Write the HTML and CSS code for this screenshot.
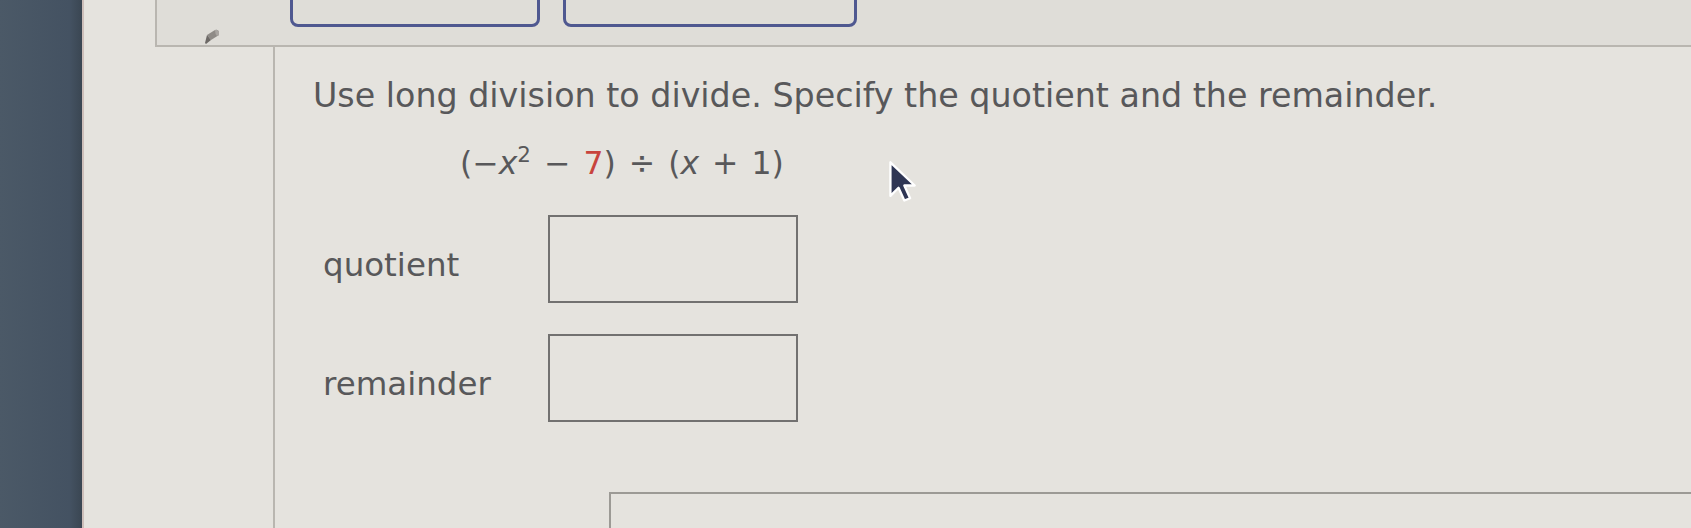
FILE: index.html
```html
<!DOCTYPE html>
<html lang="en">
<head>
    <meta charset="UTF-8">
    <meta name="viewport" content="width=device-width, initial-scale=1.0">
    <title>Long Division</title>
    <link rel="stylesheet" href="styles.css">
</head>
<body>
    <div class="screen">
        <aside class="rail"></aside>

        <div class="page">
            <div class="toolbar">
                <span class="pencil" aria-hidden="true">
                    <svg width="18" height="18" viewBox="0 0 18 18">
                        <path d="M4 8 L12 3 Q15 2 16 5 L16 8 L8 13 Z" fill="#8f8b87"/>
                        <path d="M12 3 Q15 2 16 5 L16 8 L14 9 Q12 7 12 3 Z" fill="#a9a5a1"/>
                        <path d="M4 8 L8 13 L3 17 L2 16 Z" fill="#6d6966"/>
                    </svg>
                </span>
                <button class="tool-btn" aria-label="Tool one"></button>
                <button class="tool-btn tool-btn-wide" aria-label="Tool two"></button>
            </div>

            <main class="question">
                <p class="prompt">Use long division to divide. Specify the quotient and the remainder.</p>

                <div class="expr">(&minus;<i>x</i><sup>2</sup> &minus; <span class="given">7</span>) &divide; (<i>x</i> + 1)</div>

                <div class="answers">
                    <label for="quotient" class="answer-label">quotient</label>
                    <input type="text" id="quotient" class="answer-box">
                    <label for="remainder" class="answer-label">remainder</label>
                    <input type="text" id="remainder" class="answer-box">
                </div>

                <div class="next-panel"></div>
            </main>
        </div>

        <svg class="cursor" width="28" height="44" viewBox="0 0 24 38" aria-hidden="true">
            <path d="M2 2 L2 31 L9 24 L14 35 L19 33 L14 22 L23 22 Z" fill="#2f3654" stroke="#ffffff" stroke-width="2" stroke-linejoin="round"/>
        </svg>
    </div>
</body>
</html>
```

FILE: styles.css
```css
:root {
    --paper: #e5e3de;
    --panel: #dfddd8;
    --rule: #b9b6b0;
    --ink: #58585a;
    --box-line: #727170;
    --tool-blue: #4f5890;
    --given-red: #c8443d;
}

* {
    box-sizing: border-box;
}

body {
    margin: 0;
    background-color: var(--paper);
    font-family: "DejaVu Sans", Verdana, sans-serif;
    color: var(--ink);
    overflow: hidden;
}

.screen {
    position: relative;
    display: flex;
    width: 1691px;
    height: 528px;
    overflow: hidden;
}

.rail {
    flex: 0 0 84px;
    background: linear-gradient(90deg, #4b5967 0%, #445262 85%, #3a4652 100%);
    border-right: 2px solid #cdbfba;
}

.page {
    flex: 1;
    display: flex;
    flex-direction: column;
    min-width: 0;
}

.toolbar {
    display: flex;
    align-items: flex-start;
    height: 53px;
    margin-left: 71px;
    padding-left: 46px;
    background-color: var(--panel);
    border-left: 2px solid var(--rule);
    border-bottom: 2px solid var(--rule);
}

.pencil {
    display: block;
    margin-top: 27px;
    width: 18px;
    height: 18px;
}

.tool-btn {
    width: 250px;
    height: 42px;
    margin-top: -15px;
    margin-left: 69px;
    background: transparent;
    border: 3px solid var(--tool-blue);
    border-radius: 8px;
    padding: 0;
}

.tool-btn-wide {
    width: 294px;
    margin-left: 23px;
}

.question {
    flex: 1;
    display: flex;
    flex-direction: column;
    align-items: flex-start;
    margin-left: 189px;
    padding: 29px 0 0 38px;
    border-left: 2px solid var(--rule);
}

.prompt {
    margin: 0;
    font-size: 33.3px;
    line-height: 40px;
    white-space: nowrap;
}

.expr {
    margin: 27px 0 0 147px;
    font-size: 31.5px;
    line-height: 40px;
    white-space: nowrap;
    word-spacing: 3px;
}

.expr sup {
    font-size: 0.68em;
    line-height: 0;
    vertical-align: 0.55em;
}

.given {
    color: var(--given-red);
}

.answers {
    display: grid;
    grid-template-columns: 225px 250px;
    row-gap: 31px;
    margin: 32px 0 0 10px;
}

.answer-label {
    margin-top: 30px;
    font-size: 32.5px;
    line-height: 40px;
}

.answer-box {
    width: 250px;
    height: 88px;
    background: transparent;
    border: 2px solid var(--box-line);
    border-radius: 0;
    outline: none;
}

.next-panel {
    align-self: stretch;
    height: 60px;
    margin: 70px -40px 0 296px;
    border-top: 2px solid #9c9a95;
    border-left: 2px solid #9c9a95;
}

.cursor {
    position: absolute;
    left: 888px;
    top: 160px;
}
```
